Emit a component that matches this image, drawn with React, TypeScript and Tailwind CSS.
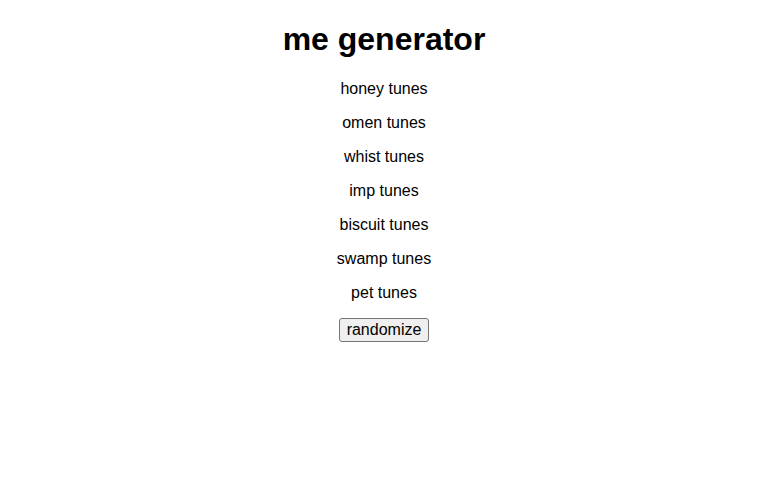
import React, { useState } from 'react';

const words = ['honey', 'omen', 'whist', 'imp', 'biscuit', 'swamp', 'pet', 'moss', 'lantern', 'velvet', 'gravel', 'thistle'];

export default function App() {
    const [items, setItems] = useState(['honey', 'omen', 'whist', 'imp', 'biscuit', 'swamp', 'pet']);

    const randomize = () => {
        const shuffled = [...words].sort(() => Math.random() - 0.5);
        setItems(shuffled.slice(0, 7));
    };

    return (
        <div className="text-center text-black bg-white" style={{ fontFamily: '"Liberation Sans", Arial, sans-serif' }}>
            <h1 className="text-[32px] font-bold leading-[normal] my-[21.44px]">me generator</h1>
            {items.map(item => (
                <p key={item} className="my-4 text-base leading-[normal]">
                    {item} tunes
                </p>
            ))}
            <button
                onClick={randomize}
                className="text-base leading-[normal] px-[7px] py-[2px] border border-[#767676] rounded-[3px] bg-[#efefef] hover:bg-[#e5e5e5] text-black"
            >
                randomize
            </button>
        </div>
    );
}
